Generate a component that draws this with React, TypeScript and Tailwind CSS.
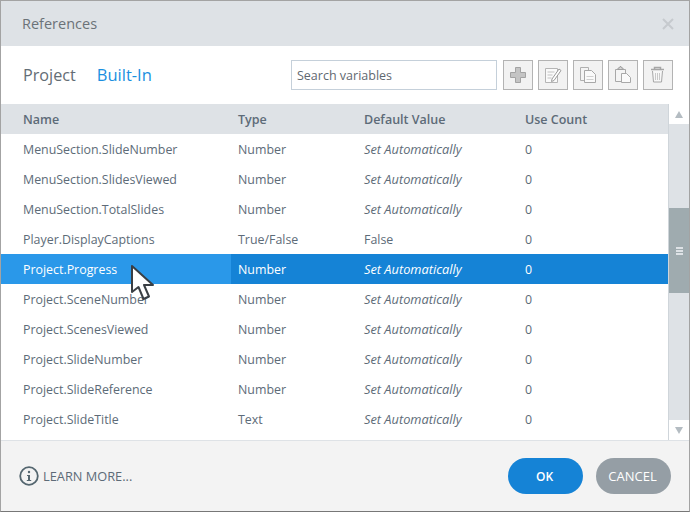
import { Fragment } from "react";

const rows = [
  ["MenuSection.SlideNumber", "Number", "Set Automatically"],
  ["MenuSection.SlidesViewed", "Number", "Set Automatically"],
  ["MenuSection.TotalSlides", "Number", "Set Automatically"],
  ["Player.DisplayCaptions", "True/False", "False"],
  ["Project.Progress", "Number", "Set Automatically"],
  ["Project.SceneNumber", "Number", "Set Automatically"],
  ["Project.ScenesViewed", "Number", "Set Automatically"],
  ["Project.SlideNumber", "Number", "Set Automatically"],
  ["Project.SlideReference", "Number", "Set Automatically"],
  ["Project.SlideTitle", "Text", "Set Automatically"],
];

const toolIcons = [
  <path key="add" d="M9.500 4.500h5v5h5v5h-5v5h-5v-5h-5v-5h5z" fill="#c4c4c4" stroke="#a3a3a3" />,
  <Fragment key="edit">
    <path d="M4.500 5.500h12v14h-12z" fill="#fafafa" stroke="#b5b5b5" />
    <path d="M6.500 9h7M6.500 12h5M6.500 15h4" stroke="#c2c2c2" />
    <path d="M11 16l7-10 2 1.500-7 10-2.500 1z" fill="#fff" stroke="#9a9a9a" />
  </Fragment>,
  <Fragment key="copy">
    <path d="M4.500 4.500h8v13h-8z" fill="#f4f4f4" stroke="#b0b0b0" />
    <path d="M8.500 7.500h7l4 4v8h-11z" fill="#fafafa" stroke="#a8a8a8" />
    <path d="M10.500 13.500h7M10.500 16.500h7" stroke="#d0d0d0" />
  </Fragment>,
  <Fragment key="paste">
    <path d="M4.500 6.500h10v12h-10z" fill="#f4f4f4" stroke="#a8a8a8" />
    <path d="M7 6.500v-1.500h1.500l.5-1.500h1l.5 1.500h1.500v1.500z" fill="#d8d8d8" stroke="#a0a0a0" />
    <path d="M10.500 10.500h5l4 4v5h-9z" fill="#fafafa" stroke="#a8a8a8" />
  </Fragment>,
  <Fragment key="trash">
    <path d="M5 6.500h13M8.500 6.500v-2h6v2" fill="none" stroke="#a6a6a6" strokeWidth="1.500" />
    <path d="M6.500 8l1 11h8l1-11" fill="#f7f7f7" stroke="#a6a6a6" />
    <path d="M9.500 10v7M11.500 10v7M13.500 10v7" stroke="#c8c8c8" />
  </Fragment>,
];

export default function App() {
  return (
    <div className="flex h-[512px] w-[690px] flex-col overflow-hidden border border-[#a3a3a3] border-b-[#777] bg-white font-['Open_Sans',sans-serif] text-[#5d6b78]">
      <header className="flex h-[45px] shrink-0 items-center justify-between bg-[#dee2e6] pl-[21px] pr-[15px]">
        <span className="text-[14.500px] text-[#6b7278]">References</span>
        <svg width="12" height="12" viewBox="0 0 12 12" stroke="#c6cace" strokeWidth="2">
          <path d="M1 1l10 10M11 1L1 11" />
        </svg>
      </header>

      <div className="flex h-[58px] shrink-0 items-center pl-[22px] pr-[16px]">
        <span className="text-[16.200px] text-[#646d75]">Project</span>
        <span className="ml-[21px] text-[16.500px] text-[#1b8fe0]">Built-In</span>
        <div className="ml-auto flex items-center">
          <div className="mr-[6px] flex h-[30px] w-[206px] items-center border border-[#c5d0da] pl-[5px] pt-[3px] text-[12.500px] text-[#5f6870]">
            Search variables
          </div>
          <div className="flex gap-[5px]">
            {toolIcons.map((icon, i) => (
              <div
                key={i}
                className="flex h-[30px] w-[30px] items-center justify-center border border-[#b3b3b3] bg-[#f2f2f2]"
              >
                <svg width="24" height="24" viewBox="0 0 24 24">
                  {icon}
                </svg>
              </div>
            ))}
          </div>
        </div>
      </div>

      <div className="flex min-h-0 flex-1">
        <div className="min-w-0 flex-1">
          <div className="flex h-[30px] items-center bg-[#dee2e6] pt-[2px] text-[12.500px] font-semibold text-[#5d6b78]">
            <div className="w-[230px] pl-[22px]">Name</div>
            <div className="w-[126px] pl-[7px]">Type</div>
            <div className="w-[161px] pl-[7px]">Default Value</div>
            <div className="pl-[7px]">Use Count</div>
          </div>
          {rows.map(([name, type, value]) => {
            const selected = name === "Project.Progress";
            return (
              <div
                key={name}
                className={`flex h-[30px] items-center text-[12.400px] ${selected ? "bg-[#1583d6] text-white" : ""}`}
              >
                <div className={`flex h-full w-[230px] items-center pl-[22px] pt-[2px] ${selected ? "bg-[#2a98e9]" : ""}`}>
                  {name}
                </div>
                <div className="w-[126px] pl-[7px] pt-[2px]">{type}</div>
                <div className={`w-[161px] pl-[7px] pt-[2px] ${value === "False" ? "" : "text-[12.800px] italic"}`}>
                  {value}
                </div>
                <div className="pl-[7px] pt-[2px]">0</div>
              </div>
            );
          })}
        </div>

        <div className="flex w-[21px] shrink-0 flex-col border-l border-[#cfd5da] bg-[#dee2e6]">
          <div className="flex h-[20px] items-center justify-center bg-white">
            <svg width="8" height="7" viewBox="0 0 8 7" fill="#b4bcc2">
              <path d="M4 0l4 7H0z" />
            </svg>
          </div>
          <div className="mt-[84px] flex h-[85px] items-center justify-center bg-[#9fabaf]">
            <div className="flex w-[7px] flex-col gap-[1px]">
              <div className="h-[2px] bg-[#dee2e6]" />
              <div className="h-[2px] bg-[#dee2e6]" />
              <div className="h-[2px] bg-[#dee2e6]" />
            </div>
          </div>
          <div className="mt-auto flex h-[20px] items-center justify-center bg-white">
            <svg width="8" height="7" viewBox="0 0 8 7" fill="#b4bcc2">
              <path d="M4 7L8 0H0z" />
            </svg>
          </div>
        </div>
      </div>

      <footer className="flex h-[71px] shrink-0 items-center justify-between border-t border-[#dee2e6] bg-[#f3f3f3] pl-[18px] pr-[18px]">
        <div className="flex items-center gap-[4px] text-[12.800px] text-[#5d6b78]">
          <svg width="20" height="20" viewBox="0 0 20 20">
            <circle cx="10" cy="10" r="8.800" fill="none" stroke="#54666f" strokeWidth="1.800" />
            <circle cx="10" cy="6" r="1.200" fill="#54666f" />
            <path d="M8 9h3v5h1.200v1H7.800v-1H9v-4H8z" fill="#54666f" />
          </svg>
          <span className="pt-[2px]">LEARN MORE...</span>
        </div>
        <div className="flex gap-[13px]">
          <button className="h-[36px] w-[75px] rounded-full bg-[#1583d6] pr-[2px] pt-[2px] text-[12px] font-semibold text-white">
            OK
          </button>
          <button className="h-[36px] w-[75px] rounded-full bg-[#959ea5] pr-[2px] pt-[1px] text-[13px] font-medium text-white">
            CANCEL
          </button>
        </div>
      </footer>

      <svg className="absolute left-[130px] top-[264px]" width="26" height="38" viewBox="0 0 26 38">
        <path
          d="M2 2v26l6.500-5 5 12 5.500-2.500-5-11.500h9z"
          fill="#fff"
          stroke="#3a3f44"
          strokeWidth="2"
          strokeLinejoin="round"
        />
      </svg>
    </div>
  );
}
